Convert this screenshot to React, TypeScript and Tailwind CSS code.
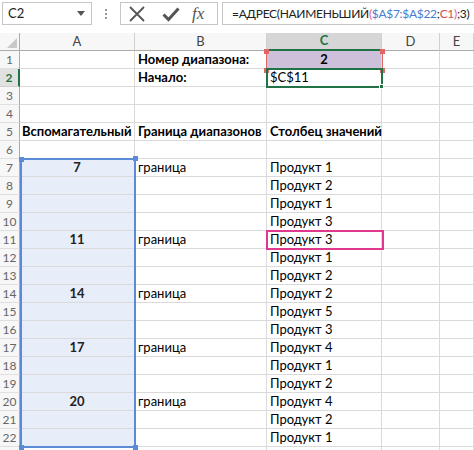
import React from "react";

const FONT = { fontFamily: "Lato, 'Noto Sans', sans-serif" };

// A, B, C values per row
const DATA: Record<number, [string, string, string]> = {
  1: ["", "Номер диапазона:", "2"],
  2: ["", "Начало:", "$C$11"],
  5: ["Вспомагательный", "Граница диапазонов", "Столбец значений"],
  7: ["7", "граница", "Продукт 1"],
  8: ["", "", "Продукт 2"],
  9: ["", "", "Продукт 1"],
  10: ["", "", "Продукт 3"],
  11: ["11", "граница", "Продукт 3"],
  12: ["", "", "Продукт 1"],
  13: ["", "", "Продукт 2"],
  14: ["14", "граница", "Продукт 2"],
  15: ["", "", "Продукт 5"],
  16: ["", "", "Продукт 3"],
  17: ["17", "граница", "Продукт 4"],
  18: ["", "", "Продукт 1"],
  19: ["", "", "Продукт 2"],
  20: ["20", "граница", "Продукт 4"],
  21: ["", "", "Продукт 2"],
  22: ["", "", "Продукт 1"],
};

const ROWS = Array.from({ length: 23 }, (_, i) => i + 1);

function FormulaBar() {
  return (
    <div className="flex h-[33px] items-start gap-0 bg-white pt-[2px]">
      <div className="ml-[2px] flex h-[23px] w-[90px] items-center justify-between border border-[#c6c6c6] pl-[5px] pr-[6px] text-[13px] text-[#222]">
        <span>C2</span>
        <svg width="8" height="5" viewBox="0 0 8 5">
          <path d="M0 0h8L4 5z" fill="#555" />
        </svg>
      </div>
      <div className="flex h-[23px] w-[28px] flex-col items-center justify-center gap-[2px]">
        <span className="h-[2px] w-[2px] bg-[#999]" />
        <span className="h-[2px] w-[2px] bg-[#999]" />
        <span className="h-[2px] w-[2px] bg-[#999]" />
      </div>
      <div className="flex h-[23px] w-[98px] items-center border border-[#c6c6c6]">
        <svg className="ml-[7px]" width="18" height="16" viewBox="0 0 18 16">
          <path d="M2 1L16 15M16 1L2 15" stroke="#555" strokeWidth="1.8" />
        </svg>
        <svg className="ml-[16px]" width="18" height="16" viewBox="0 0 18 16">
          <path d="M1.5 8.5L6.5 13.5L16.5 2.5" stroke="#555" strokeWidth="3" fill="none" />
        </svg>
        <span
          className="ml-[12px] text-[17px] italic text-[#555]"
          style={{ fontFamily: "'Liberation Serif', serif" }}
        >
          fx
        </span>
      </div>
      <div className="ml-[4px] flex h-[23px] min-w-0 flex-1 items-center whitespace-nowrap border border-r-0 border-[#c6c6c6] pl-[9px] text-[12px] tracking-[-0.3px] text-[#222]">
        =АДРЕС(НАИМЕНЬШИЙ<span className="text-[#e0608a]">(</span>
        <span className="text-[#4a7bd0]">$A$7:$A$22</span>;
        <span className="text-[#d0504d]">C1</span>
        <span className="text-[#e0608a]">)</span>;3)
      </div>
    </div>
  );
}

function Handle({ className }: { className: string }) {
  return <span className={`absolute h-[5px] w-[5px] ${className}`} />;
}

export default function App() {
  return (
    <div className="h-[450px] w-[474px] overflow-hidden bg-white text-black" style={FONT}>
      <FormulaBar />
      <div className="relative">
        <div className="grid grid-cols-[20px_115px_132px_115px_58px_1fr] auto-rows-[18px]">
          {/* header row */}
          <div className="relative border-b border-r border-[#ababab] bg-[#f7f7f7]">
            <svg className="absolute bottom-[2px] right-[2px]" width="10" height="10" viewBox="0 0 10 10">
              <path d="M10 0V10H0z" fill="#c8c8c8" />
            </svg>
          </div>
          {["A", "B", "C", "D", "E"].map((c) =>
            c === "C" ? (
              <div
                key={c}
                className="flex items-center justify-center border-b-2 border-r border-b-[#217346] border-r-[#d0d0d0] bg-[#d6d6d6] text-[13px] font-bold text-[#217346]"
              >
                {c}
              </div>
            ) : (
              <div
                key={c}
                className="flex items-center justify-center border-b border-r border-b-[#ababab] border-r-[#d0d0d0] bg-[#f7f7f7] text-[13px] text-[#444]"
              >
                {c}
              </div>
            )
          )}
          {ROWS.map((r) => {
            const [a, b, c] = DATA[r] ?? ["", "", ""];
            const inRange = r >= 7 && r <= 22;
            const bold = r === 1 || r === 2 || r === 5;
            return (
              <React.Fragment key={r}>
                {r === 2 ? (
                  <div className="flex items-center justify-center border-b border-r-2 border-b-[#d0d0d0] border-r-[#217346] bg-[#e1e1e1] text-[12px] font-bold text-[#217346]">
                    {r}
                  </div>
                ) : (
                  <div className="flex items-center justify-center border-b border-r border-b-[#e0e0e0] border-r-[#ababab] bg-[#f7f7f7] text-[12px] text-[#666]">
                    {r}
                  </div>
                )}
                <div
                  className={`flex items-center whitespace-nowrap border-b border-r border-[#dadada] px-[2px] text-[13px] ${
                    inRange ? "justify-center bg-[#e8eef9] font-bold text-[#222]" : ""
                  } ${r === 5 ? "font-bold" : ""}`}
                >
                  {a}
                </div>
                <div
                  className={`flex items-center whitespace-nowrap border-b border-r border-[#dadada] px-[3px] text-[13px] ${
                    bold ? "font-bold" : ""
                  }`}
                >
                  {b}
                </div>
                <div
                  className={`flex items-center whitespace-nowrap border-b border-r border-[#dadada] px-[3px] text-[13px] ${
                    r === 1 ? "justify-center bg-[#ccc0da] font-bold" : ""
                  } ${r === 5 ? "font-bold" : ""}`}
                >
                  {c}
                </div>
                <div className="border-b border-r border-[#dadada]" />
                <div className="border-b border-r border-[#dadada]" />
              </React.Fragment>
            );
          })}
        </div>

        {/* C1 reference highlight */}
        <div className="pointer-events-none absolute left-[266px] top-[18px] h-[19px] w-[117px] border-x border-[#e06666]">
          <Handle className="-left-[3px] -top-[2px] bg-[#e06666]" />
          <Handle className="-right-[3px] -top-[2px] bg-[#e06666]" />
          <Handle className="-bottom-[3px] -left-[3px] bg-[#e06666]" />
          <Handle className="-bottom-[3px] -right-[3px] bg-[#e06666]" />
        </div>

        {/* C2 active cell */}
        <div className="pointer-events-none absolute left-[266px] top-[35px] h-[20px] w-[117px] border-2 border-[#217346]">
          <Handle className="-bottom-[3px] -right-[3px] border border-white bg-[#217346]" />
        </div>

        {/* A7:A22 reference highlight */}
        <div className="pointer-events-none absolute left-[20px] top-[125px] h-[290px] w-[116px] border-2 border-[#5b8ad6]">
          <Handle className="-left-[3px] -top-[3px] h-[4px] w-[4px] bg-[#5b8ad6]" />
          <Handle className="-right-[4px] -top-[4px] bg-[#5b8ad6]" />
          <Handle className="-bottom-[4px] -left-[3px] bg-[#5b8ad6]" />
          <Handle className="-bottom-[4px] -right-[4px] bg-[#5b8ad6]" />
        </div>

        {/* C11 marker */}
        <div className="pointer-events-none absolute left-[266px] top-[197px] h-[20px] w-[118px] border-2 border-[#e0388f]" />
      </div>
    </div>
  );
}
